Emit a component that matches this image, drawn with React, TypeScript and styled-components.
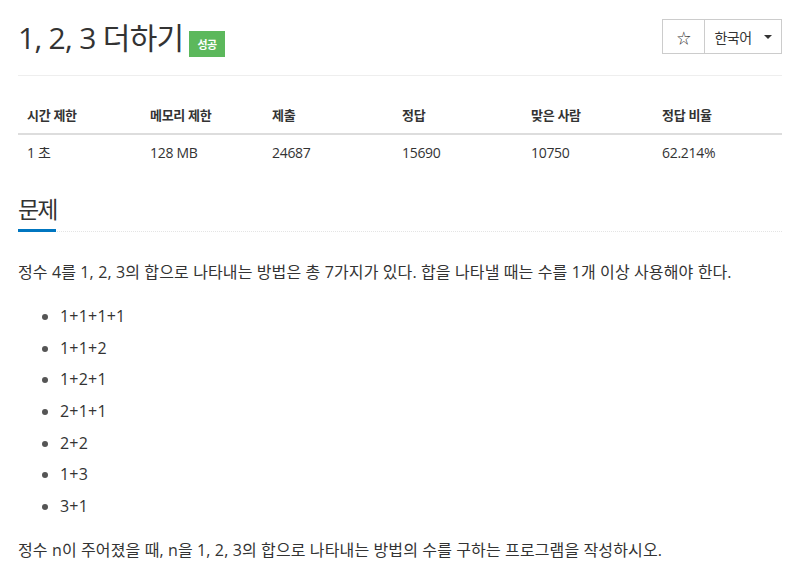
import React from "react";
import styled, { createGlobalStyle } from "styled-components";

const Global = createGlobalStyle`
  html, body { margin: 0; padding: 0; background: #fff; }
  body {
    font-family: "Open Sans", "Noto Sans CJK KR", sans-serif;
    color: #333;
  }
`;

const Page = styled.div`
  padding: 0 18px;
`;

const Header = styled.div`
  display: flex;
  justify-content: space-between;
  align-items: flex-start;
  padding-top: 18px;
  padding-bottom: 17px;
  border-bottom: 1px solid #eee;
`;

const TitleRow = styled.div`
  display: flex;
  align-items: flex-end;
  gap: 6px;
`;

const Title = styled.h1`
  margin: 0;
  font-size: 30px;
  line-height: 40px;
  font-weight: 400;
  letter-spacing: -0.7px;
  color: #333;
`;

const Badge = styled.span`
  display: inline-flex;
  align-items: center;
  justify-content: center;
  height: 26px;
  padding: 0 8px;
  margin-bottom: 1px;
  background: #5cb85c;
  color: #fff;
  font-size: 11px;
  font-weight: 700;
  letter-spacing: -0.5px;
`;

const BtnGroup = styled.div`
  display: flex;
  margin-top: 1px;
`;

const Btn = styled.button<{ $w: number }>`
  box-sizing: border-box;
  width: ${(p) => p.$w}px;
  height: 35px;
  background: #fff;
  border: 1px solid #ccc;
  margin-left: -1px;
  font-family: "Open Sans", "Noto Sans CJK KR", sans-serif;
  font-size: 14px;
  color: #333;
  display: flex;
  align-items: center;
  justify-content: center;
  gap: 12px;
  padding: 0;
  letter-spacing: -0.5px;
`;

const Caret = styled.span`
  width: 0;
  height: 0;
  border-left: 4px solid transparent;
  border-right: 4px solid transparent;
  border-top: 4px solid #333;
`;

const Table = styled.table`
  width: 100%;
  margin-top: 21px;
  border-collapse: collapse;
  table-layout: fixed;
`;

const Th = styled.th<{ $w?: number }>`
  box-sizing: border-box;
  width: ${(p) => (p.$w ? `${p.$w}px` : "auto")};
  text-align: left;
  padding: 8px 9px;
  font-size: 13px;
  line-height: 20px;
  font-weight: 700;
  border-bottom: 2px solid #ddd;
  letter-spacing: -0.3px;
`;

const Td = styled.td`
  padding: 8px 9px;
  font-size: 14px;
  line-height: 20px;
  letter-spacing: -0.3px;
`;

const Headline = styled.div`
  margin-top: 20px;
  border-bottom: 1px dotted #e4e4e4;
`;

const H2 = styled.h2`
  display: inline-block;
  margin: 0 0 -1px;
  font-size: 23px;
  line-height: 36px;
  font-weight: 400;
  letter-spacing: -2px;
  padding-bottom: 2px;
  border-bottom: 3px solid #0076c0;
`;

const Para = styled.p<{ $mt: number }>`
  margin: ${(p) => p.$mt}px 0 0;
  font-size: 16px;
  line-height: 20px;
  letter-spacing: 0.12px;
`;

const List = styled.ul`
  margin: 19px 0 0;
  padding-left: 42px;
  color: #555;
`;

const Item = styled.li`
  font-size: 16px;
  line-height: 31.67px;
  color: #333;
  letter-spacing: 0.2px;
  &::marker { color: #555; }
`;

const cols = [123, 122, 130, 129, 131];
const heads = ["시간 제한", "메모리 제한", "제출", "정답", "맞은 사람", "정답 비율"];
const vals = ["1 초", "128 MB", "24687", "15690", "10750", "62.214%"];
const items = ["1+1+1+1", "1+1+2", "1+2+1", "2+1+1", "2+2", "1+3", "3+1"];

export default function App() {
  return (
    <Page>
      <Global />
      <Header>
        <TitleRow>
          <Title>1, 2, 3 더하기</Title>
          <Badge>성공</Badge>
        </TitleRow>
        <BtnGroup>
          <Btn $w={43}>☆</Btn>
          <Btn $w={78}>
            <span>한국어</span>
            <Caret />
          </Btn>
        </BtnGroup>
      </Header>
      <Table>
        <thead>
          <tr>
            {heads.map((h, i) => (
              <Th key={h} $w={cols[i]}>
                {h}
              </Th>
            ))}
          </tr>
        </thead>
        <tbody>
          <tr>
            {vals.map((v) => (
              <Td key={v}>{v}</Td>
            ))}
          </tr>
        </tbody>
      </Table>
      <Headline>
        <H2>문제</H2>
      </Headline>
      <Para $mt={30}>
        정수 4를 1, 2, 3의 합으로 나타내는 방법은 총 7가지가 있다. 합을 나타낼 때는 수를 1개 이상 사용해야 한다.
      </Para>
      <List>
        {items.map((it) => (
          <Item key={it}>{it}</Item>
        ))}
      </List>
      <Para $mt={17}>
        정수 n이 주어졌을 때, n을 1, 2, 3의 합으로 나타내는 방법의 수를 구하는 프로그램을 작성하시오.
      </Para>
    </Page>
  );
}
